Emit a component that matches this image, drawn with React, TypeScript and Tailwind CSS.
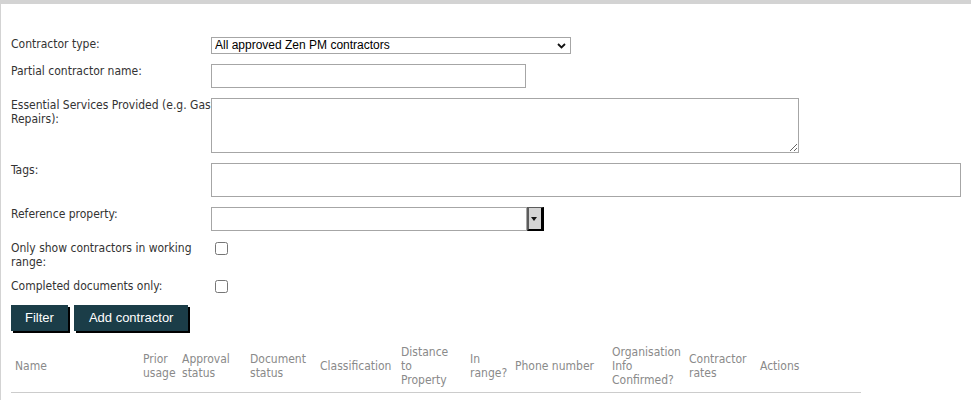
import React from 'react';

const labelFont = "font-['DejaVu_Sans_Condensed','DejaVu_Sans',sans-serif]";

interface RowProps {
	label: React.ReactNode;
	children: React.ReactNode;
}

function Row({ label, children }: RowProps) {
	return (
		<div className="flex items-start">
			<label className={`w-[200px] shrink-0 text-[12px] leading-[14px] text-[#333] ${labelFont}`}>{label}</label>
			{children}
		</div>
	);
}

const columns: { title: React.ReactNode; width: string }[] = [
	{ title: 'Name', width: 'w-[128px]' },
	{ title: <>Prior<br />usage</>, width: 'w-[39px]' },
	{ title: <>Approval<br />status</>, width: 'w-[68px]' },
	{ title: <>Document<br />status</>, width: 'w-[70px]' },
	{ title: 'Classification', width: 'w-[81px]' },
	{ title: <>Distance<br />to<br />Property</>, width: 'w-[69px]' },
	{ title: <>In<br />range?</>, width: 'w-[45px]' },
	{ title: 'Phone number', width: 'w-[97px]' },
	{ title: <>Organisation<br />Info<br />Confirmed?</>, width: 'w-[77px]' },
	{ title: <>Contractor<br />rates</>, width: 'w-[71px]' },
	{ title: 'Actions', width: 'w-[105px]' },
];

export default function App() {
	return (
		<div className="h-[400px] w-[971px] overflow-hidden bg-white">
			<div className="h-[4px] bg-[#d3d3d3]" />
			<div className="h-[396px] border-l border-[#d3d3d3] pl-[10px] pt-[33px]">
				<form className="flex flex-col gap-[10px]" onSubmit={(e) => e.preventDefault()}>
					<Row label="Contractor type:">
						<div className="relative">
							<select
								className="block h-[17px] w-[360px] appearance-none border border-[#a6a6a6] bg-white pl-[3px] text-[12px] leading-[15px] text-black font-['Liberation_Sans',Arial,sans-serif] outline-none"
								defaultValue="approved"
							>
								<option value="approved">All approved Zen PM contractors</option>
							</select>
							<svg
								className="pointer-events-none absolute right-[5px] top-[6px]"
								width="9"
								height="6"
								viewBox="0 0 9 6"
							>
								<polyline points="1,1 4.5,4.5 8,1" fill="none" stroke="#111" strokeWidth="1.8" />
							</svg>
						</div>
					</Row>
					<Row label="Partial contractor name:">
						<input className="block h-[24px] w-[315px] border border-[#a6a6a6] outline-none" />
					</Row>
					<Row label={<>Essential Services Provided (e.g. Gas<br />Repairs):</>}>
						<textarea className="block h-[55px] w-[588px] border border-[#a6a6a6] outline-none" />
					</Row>
					<Row label="Tags:">
						<input className="block h-[34px] w-[750px] border border-[#a6a6a6] outline-none" />
					</Row>
					<Row label="Reference property:">
						<div className="flex">
							<input className="block h-[24px] w-[316px] border border-[#a6a6a6] outline-none" />
							<button
								type="button"
								className="flex h-[24px] w-[17px] justify-center border-l-2 border-t border-r-[3px] border-b-2 border-l-[#5c5c5c] border-t-[#5c5c5c] border-r-black border-b-black bg-[#d4d4d4] pt-[9px] pr-[2px]"
							>
								<svg width="6" height="4" viewBox="0 0 6 4">
									<polygon points="0,0 6,0 3,4" fill="#111" />
								</svg>
							</button>
						</div>
					</Row>
					<Row label={<>Only show contractors in working<br />range:</>}>
						<input type="checkbox" className="m-0 ml-[4px] mt-[1px] block h-[13px] w-[13px]" />
					</Row>
					<Row label="Completed documents only:">
						<input type="checkbox" className="m-0 ml-[4px] mt-[1px] block h-[13px] w-[13px]" />
					</Row>
				</form>
				<div className="mt-[12px] flex gap-[6px]">
					<button className="h-[26px] bg-[#1b3d48] px-[14px] pb-[1px] text-[13px] text-white shadow-[2px_2px_0_#000] font-['Liberation_Sans',Arial,sans-serif]">
						Filter
					</button>
					<button className="h-[26px] bg-[#1b3d48] px-[15px] pb-[1px] text-[13px] text-white shadow-[2px_2px_0_#000] font-['Liberation_Sans',Arial,sans-serif]">
						Add contractor
					</button>
				</div>
				<div className={`mt-[7px] flex w-[850px] items-center border-b border-[#cccccc] pt-[7px] pb-[5px] text-[12px] leading-[14px] text-[#8a8a8a] ${labelFont}`}>
					{columns.map((col, i) => (
						<div key={i} className={`${col.width} shrink-0 pl-[4px]`}>
							{col.title}
						</div>
					))}
				</div>
			</div>
		</div>
	);
}
